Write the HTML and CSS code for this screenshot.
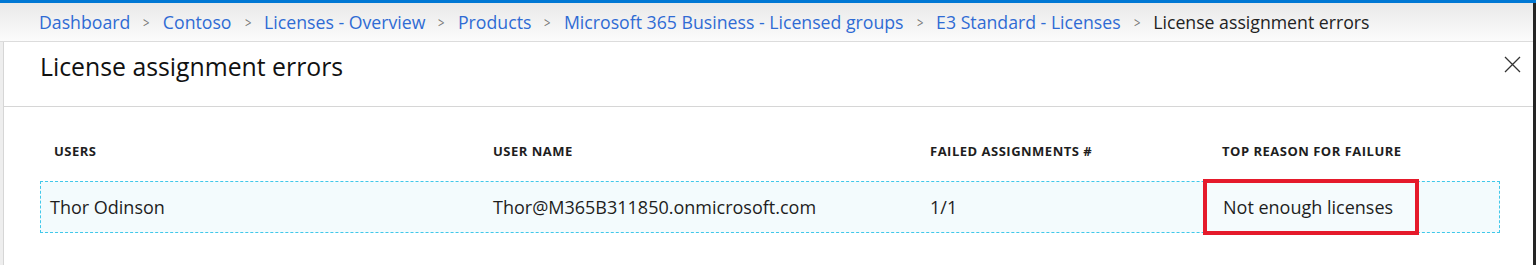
FILE: index.html
```html
<!DOCTYPE html>
<html lang="en">
<head>
    <meta charset="UTF-8">
    <meta name="viewport" content="width=device-width, initial-scale=1.0">
    <title>License assignment errors</title>
    <link rel="stylesheet" href="styles.css">
</head>
<body>
    <div class="top-line"></div>
    <div class="shell">
        <div class="main">
            <nav class="breadcrumb">
                <a href="#">Dashboard</a><span class="sep">&gt;</span>
                <a href="#">Contoso</a><span class="sep">&gt;</span>
                <a href="#">Licenses - Overview</a><span class="sep">&gt;</span>
                <a href="#">Products</a><span class="sep">&gt;</span>
                <a href="#">Microsoft 365 Business - Licensed groups</a><span class="sep">&gt;</span>
                <a href="#">E3 Standard - Licenses</a><span class="sep">&gt;</span>
                <span class="current">License assignment errors</span>
            </nav>
            <div class="stage">
                <div class="edge"></div>
                <div class="blade">
                    <div class="blade-header">
                        <h2>License assignment errors</h2>
                        <button class="close-btn" aria-label="Close">
                            <svg width="17" height="17" viewBox="0 0 17 17">
                                <path d="M1 1 L16 16 M16 1 L1 16" stroke="#333" stroke-width="1.3" fill="none"/>
                            </svg>
                        </button>
                    </div>
                    <div class="blade-content">
                        <div class="grid head">
                            <div class="first">USERS</div>
                            <div>USER NAME</div>
                            <div>FAILED ASSIGNMENTS #</div>
                            <div class="last">TOP REASON FOR FAILURE</div>
                        </div>
                        <div class="grid row selected">
                            <div class="first">Thor Odinson</div>
                            <div>Thor@M365B311850.onmicrosoft.com</div>
                            <div>1/1</div>
                            <div><span class="highlight">Not enough licenses</span></div>
                        </div>
                    </div>
                </div>
            </div>
        </div>
        <div class="right-bar"></div>
    </div>
</body>
</html>
```

FILE: styles.css
```css
body {
    margin: 0;
    background-color: #fff;
    font-family: "Segoe UI", "Open Sans", "Noto Sans", sans-serif;
    color: #1e1e1e;
    height: 265px;
    overflow: hidden;
}
.top-line {
    height: 3px;
    background-color: #0078d4;
}
.shell {
    display: flex;
    height: 262px;
}
.main {
    flex: 1;
    display: flex;
    flex-direction: column;
}
.right-bar {
    width: 3px;
    background-color: #252525;
}
.breadcrumb {
    height: 38px;
    display: flex;
    align-items: center;
    padding-left: 39px;
    font-size: 17.7px;
    background: linear-gradient(#e9e9e9, #fcfcfc);
    border-bottom: 1px solid #dcdcdc;
    white-space: nowrap;
}
.breadcrumb a {
    color: #2f6bd4;
    text-decoration: none;
}
.breadcrumb .sep {
    color: #777;
    font-size: 15px;
    margin: 0 12px;
    transform: scaleX(0.75);
    display: inline-block;
}
.breadcrumb .current {
    color: #222;
}
.stage {
    flex: 1;
    display: flex;
}
.edge {
    width: 3px;
    background-color: #eeeeee;
    border-right: 1px solid #d6d6d6;
}
.blade {
    flex: 1;
    background-color: #fff;
}
.blade-header {
    height: 64px;
    display: flex;
    align-items: flex-start;
    justify-content: space-between;
    border-bottom: 1px solid #d6d6d6;
}
.blade-header h2 {
    margin: 7px 0 0 36px;
    font-size: 24.8px;
    font-weight: normal;
    color: #111;
}
.close-btn {
    background: none;
    border: none;
    padding: 0;
    margin: 14px 12px 0 0;
    cursor: pointer;
}
.blade-content {
    padding: 30px 33px 0 36px;
}
.grid {
    display: grid;
    grid-template-columns: 452px 437px 273px 1fr;
    align-items: center;
    border: 1px solid transparent;
}
.head {
    height: 26px;
    font-size: 13px;
    font-weight: bold;
    letter-spacing: 0.5px;
}
.head .first {
    padding-left: 13px;
}
.head .last {
    padding-left: 19px;
}
.row {
    margin-top: 16px;
    height: 50px;
    grid-template-rows: 50px;
    font-size: 18px;
    background-color: #f3fbfd;
    border: 1px dashed #41c8ea;
}
.row .first {
    padding-left: 9px;
}
.highlight {
    display: block;
    box-sizing: border-box;
    width: 216px;
    height: 56px;
    line-height: 48px;
    padding-left: 16px;
    border: 4px solid #e51a2b;
    background-color: #f5fbfd;
}
```
